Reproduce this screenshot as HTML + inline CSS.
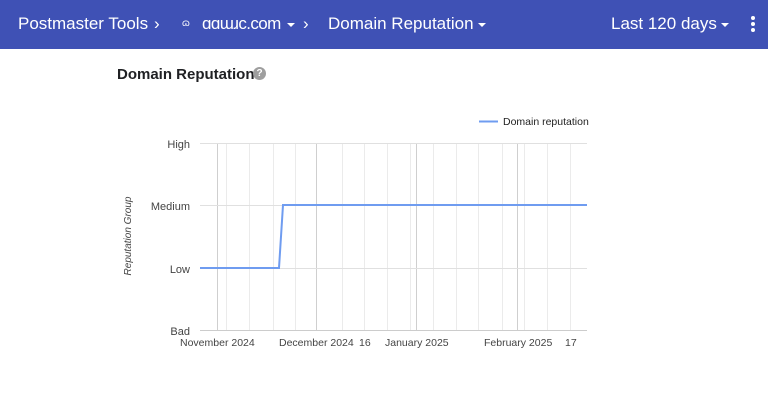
<!DOCTYPE html>
<html><head><style>
body{margin:0;width:768px;height:406px;background:#fff;font-family:"Liberation Sans",sans-serif;overflow:hidden;position:relative}
.hdr{position:absolute;left:0;top:0;width:768px;height:49px;background:#3f51b5;color:#fff;font-size:17px}
.hdr span{position:absolute;top:14px;white-space:nowrap}
.tri{display:inline-block;width:0;height:0;border-left:4px solid transparent;border-right:4px solid transparent;border-top:4px solid #fff;vertical-align:middle;margin-left:4px}
.dot{position:absolute;left:751px;width:4px;height:4px;border-radius:50%;background:#fff}
h1{position:absolute;left:117px;top:66px;margin:0;font-size:15px;font-weight:bold;color:#202124}
.q{position:absolute;left:253px;top:67px;width:13px;height:13px;border-radius:50%;background:#9e9e9e;color:#fff;font-size:10px;font-weight:bold;text-align:center;line-height:13px}
</style></head><body>
<div class="hdr">
<span style="left:18px">Postmaster Tools</span>
<span style="left:154px">›</span>
<span style="left:182px;font-size:10px;top:18px">ɷ</span>
<span style="left:202px;letter-spacing:-0.6px">ɑɑɯɹc.com<i class="tri" style="margin-left:6px"></i></span>
<span style="left:303px">›</span>
<span style="left:328px">Domain Reputation<i class="tri"></i></span>
<span style="left:611px">Last 120 days<i class="tri"></i></span>
<div class="dot" style="top:16px"></div><div class="dot" style="top:22px"></div><div class="dot" style="top:28px"></div>
</div>
<h1>Domain Reputation</h1><div class="q">?</div>
<svg width="768" height="406" style="position:absolute;left:0;top:0" font-family="Liberation Sans" font-size="11" fill="#444">
<g stroke="#ebebeb" stroke-width="1">
<path d="M226.5 143V330M249.5 143V330M273.5 143V330M295.5 143V330M342.5 143V330M364.5 143V330M387.5 143V330M410.5 143V330M433.5 143V330M456.5 143V330M478.5 143V330M502.5 143V330M524.5 143V330M547.5 143V330M570.5 143V330"/>
</g>
<g stroke="#cfcfcf"><path d="M217.5 143V330M316.5 143V330M416.5 143V330M517.5 143V330"/></g>
<g stroke="#e0e0e0"><path d="M200 143.5H587M200 205.5H587M200 268.5H587"/></g>
<path d="M200 330.5H587" stroke="#ccc"/>
<path d="M200 268H279L283 205H587" fill="none" stroke="#6f9cf0" stroke-width="2"/>
<g text-anchor="end"><text x="190" y="148">High</text><text x="190" y="210">Medium</text><text x="190" y="273">Low</text><text x="190" y="335">Bad</text></g>
<text transform="translate(131,236) rotate(-90)" text-anchor="middle" font-style="italic" font-size="10">Reputation Group</text>
<g font-size="10.5"><text x="180" y="346">November 2024</text><text x="279" y="346">December 2024</text><text x="359" y="346">16</text>
<text x="385" y="346">January 2025</text><text x="484" y="346">February 2025</text><text x="565" y="346">17</text></g>
<path d="M479 121.5H498" stroke="#6f9cf0" stroke-width="2"/>
<text x="503" y="125" fill="#222" font-size="10.5">Domain reputation</text>
</svg>
</body></html>
